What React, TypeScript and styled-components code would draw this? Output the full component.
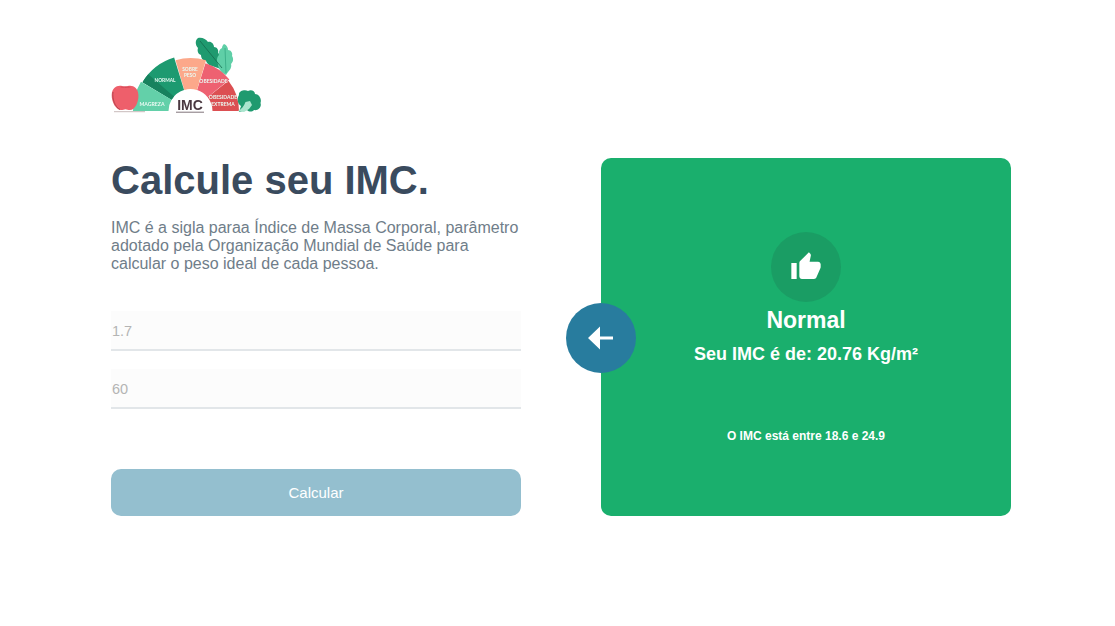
import React from "react";
import styled, { createGlobalStyle } from "styled-components";
import { MdThumbUp } from "react-icons/md";

const Global = createGlobalStyle`
  html, body { margin: 0; padding: 0; background: #fff; }
  body { font-family: "Liberation Sans", Arial, sans-serif; }
  * { box-sizing: border-box; }
`;

const Page = styled.div`
  width: 1115px;
  height: 626px;
  padding: 35px 0 0 111px;
  overflow: hidden;
`;
const LogoSvg = styled.svg`
  display: block;
  width: 150px;
  height: 80px;
  filter: blur(0.5px);
`;
const Content = styled.main`
  display: flex;
  gap: 80px;
  margin-top: 43px;
`;
const FormColumn = styled.section`
  width: 410px;
  display: flex;
  flex-direction: column;
`;
const Title = styled.h1`
  margin: -1px 0 0;
  font-size: 40px;
  line-height: 46px;
  font-weight: 700;
  color: #3a4b5e;
`;
const Description = styled.p`
  margin: 16px 0 0;
  font-size: 16px;
  line-height: 18px;
  color: #6f7d89;
`;
const Field = styled.input`
  display: block;
  width: 100%;
  height: 40px;
  margin-top: 18px;
  padding: 2px 1px 0;
  border: 0;
  border-bottom: 2px solid #e2e6e9;
  border-radius: 0;
  outline: 0;
  background: #fcfcfc;
  font: 14.5px "Liberation Sans", Arial, sans-serif;
  &::placeholder { color: #b4b4b4; opacity: 1; }
`;
const Fields = styled.div`
  margin-top: 38px;
  & > input:first-child { margin-top: 0; }
`;
const SubmitButton = styled.button`
  width: 100%;
  height: 47px;
  margin-top: 60px;
  border: 0;
  border-radius: 10px;
  background: #94bfcf;
  color: #fff;
  font: 15px "Liberation Sans", Arial, sans-serif;
`;
const ResultCard = styled.section`
  position: relative;
  width: 410px;
  height: 358px;
  padding-top: 74px;
  display: flex;
  flex-direction: column;
  align-items: center;
  border-radius: 10px;
  background: #1aaf6d;
  color: #fff;
`;
const IconCircle = styled.div`
  width: 70px;
  height: 70px;
  border-radius: 50%;
  display: flex;
  align-items: center;
  justify-content: center;
  background: #1a9d64;
`;
const Status = styled.h2`
  margin: 5px 0 0;
  font-size: 23px;
  line-height: 27px;
  font-weight: 700;
`;
const Value = styled.div`
  margin-top: 10px;
  font-size: 18px;
  line-height: 20px;
  font-weight: 700;
`;
const Range = styled.div`
  margin-top: 65px;
  font-size: 12px;
  line-height: 14px;
  font-weight: 700;
`;
const BackButton = styled.button`
  position: absolute;
  left: -35px;
  top: 145px;
  width: 70px;
  height: 70px;
  padding: 0;
  border: 0;
  border-radius: 50%;
  background: #287c9e;
  display: flex;
  align-items: center;
  justify-content: center;
`;

const CX = 190.5;
const CY = 111;
const point = (deg: number, r: number) => {
  const a = (deg * Math.PI) / 180;
  return `${(CX - r * Math.cos(a)).toFixed(2)} ${(CY - r * Math.sin(a)).toFixed(2)}`;
};
const wedge = (from: number, to: number, inner: number, outer: number) =>
  `M${point(from, inner)} L${point(from, outer)} A${outer} ${outer} 0 0 1 ${point(to, outer)} L${point(to, inner)} A${inner} ${inner} 0 0 0 ${point(from, inner)} Z`;

const labelStyle = { fontFamily: "Lato, 'Liberation Sans', sans-serif", fontWeight: 700, fill: "#eafaf3" };

const Logo = () => (
  <LogoSvg viewBox="111 35 150 80" aria-label="IMC">
    {/* leaves */}
    <path d="M198 38 C202 37 206 39 208 42 C211 41 214 44 214 47 C217 47 219 50 218 53 C221 55 222 59 221 62 L224 70 L212 66 C209 66 207 63 206 61 C203 61 201 58 201 55 C198 54 197 51 198 48 C195 45 195 40 198 38 Z" fill="#1f9a6f" />
    <path d="M224 44 C227 45 228 48 228 50 C231 50 233 53 232 56 C234 59 233 62 231 64 C232 67 230 70 228 72 L226 75 C221 73 218 68 218 64 C216 61 217 57 219 55 C218 52 220 49 222 48 C222 46 223 45 224 44 Z" fill="#5fcfa7" />
    <path d="M200 41 L222 68" stroke="#14694d" strokeWidth="0.8" fill="none" />
    <path d="M225 48 L226 73" stroke="#2fa47e" strokeWidth="0.7" fill="none" />
    {/* gauge */}
    <path d={wedge(141.4, 180, 22, 48.5)} fill="#dc4f52" />
    <path d={wedge(107.4, 141, 22, 50)} fill="#ee6171" />
    <path d={wedge(73.6, 107, 22, 53)} fill="#fca88a" />
    <path d={wedge(31, 73, 22, 56)} fill="#1d9a70" />
    <path d={wedge(31, 41, 22, 56)} fill="#17825e" />
    <path d={wedge(0, 30.5, 22, 57.5)} fill="#63d0a9" />
    <text x="152" y="105.5" fontSize="5.2" textAnchor="middle" {...labelStyle}>MAGREZA</text>
    <text x="165" y="82" fontSize="4.8" textAnchor="middle" {...labelStyle}>NORMAL</text>
    <text x="190" y="71" fontSize="4.8" textAnchor="middle" {...labelStyle}>SOBRE</text>
    <text x="190" y="76.5" fontSize="4.8" textAnchor="middle" {...labelStyle}>PESO</text>
    <text x="213.5" y="83" fontSize="5" textAnchor="middle" {...labelStyle}>OBESIDADE</text>
    <text x="223" y="99" fontSize="5" textAnchor="middle" {...labelStyle}>OBESIDADE</text>
    <text x="223" y="105.5" fontSize="5" textAnchor="middle" {...labelStyle}>EXTREMA</text>
    <text x="190" y="110" fontSize="14" fontWeight="700" textAnchor="middle" fontFamily="'Liberation Sans', sans-serif" fill="#4a3840">IMC</text>
    <path d="M176 112.2 H204" stroke="#4a3840" strokeWidth="0.7" />
    {/* apple */}
    <path d="M125 87.5 C120 84 112 86 111.7 95 C111.5 102 116 110 121 110 C123 110 124 109.2 125.5 109.2 C127 109.2 128 110 130 110 C135 110 138.8 102 138.4 95 C138 86 130 84 125 87.5 Z" fill="#ee5f6b" />
    <path d="M113 92 C112 99 115 107 120 109.5" stroke="#a63e49" strokeWidth="0.8" fill="none" />
    <path d="M120 87 C123 86 127 86 131 87 C128 88.2 123 88.2 120 87 Z" fill="#d94a57" />
    <path d="M114 111.7 H145" stroke="#b9a7a7" strokeWidth="0.8" />
    {/* broccoli */}
    <path d="M239 95 C238 91 245 89 248 91 C251 89 255 91 255 94 C259 94 262 99 260.5 103 C262 107 258 111 254 110 C252 112 249 112 247 110 L239 112 L241 106 C237 104 237 98 239 95 Z" fill="#1f9a6f" />
    <path d="M238 111 C242 109 244 106 245.5 102 L250 101 L252 105 L249 109 L244 112 Z" fill="#a9e5cd" />
  </LogoSvg>
);

const BackArrow = () => (
  <svg width="26" height="24" viewBox="0 0 26 24" aria-hidden="true">
    <path d="M0 12 L12 0.5 L12 10.5 L25 10.5 L25 13.5 L12 13.5 L12 23.5 Z" fill="#fff" />
  </svg>
);

export default function App() {
  return (
    <Page>
      <Global />
      <Logo />
      <Content>
        <FormColumn>
          <Title>Calcule seu IMC.</Title>
          <Description>
            IMC é a sigla paraa Índice de Massa Corporal, parâmetro adotado pela Organização Mundial de Saúde para
            calcular o peso ideal de cada pessoa.
          </Description>
          <Fields>
            <Field placeholder="1.7" />
            <Field placeholder="60" />
          </Fields>
          <SubmitButton>Calcular</SubmitButton>
        </FormColumn>
        <ResultCard>
          <BackButton aria-label="Voltar">
            <BackArrow />
          </BackButton>
          <IconCircle>
            <MdThumbUp size={32} color="#fff" />
          </IconCircle>
          <Status>Normal</Status>
          <Value>Seu IMC é de: 20.76 Kg/m²</Value>
          <Range>O IMC está entre 18.6 e 24.9</Range>
        </ResultCard>
      </Content>
    </Page>
  );
}
